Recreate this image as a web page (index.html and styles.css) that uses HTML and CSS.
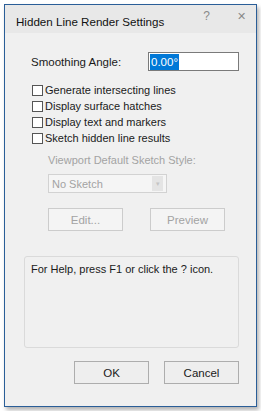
FILE: index.html
```html
<!DOCTYPE html>
<html lang="en">
<head>
  <meta charset="UTF-8">
  <title>Hidden Line Render Settings</title>
  <link rel="stylesheet" href="styles.css">
</head>
<body>
  <div class="window">
    <div class="titlebar">
      <span class="title">Hidden Line Render Settings</span>
      <span class="title-btn help">?</span>
      <span class="title-btn close">&#x2715;</span>
    </div>

    <div class="content">
      <div class="angle-row">
        <label class="angle-label">Smoothing Angle:</label>
        <div class="textbox"><span class="selected">0.00°</span></div>
      </div>

      <div class="checks">
        <div class="check"><span class="box"></span>Generate intersecting lines</div>
        <div class="check"><span class="box"></span>Display surface hatches</div>
        <div class="check"><span class="box"></span>Display text and markers</div>
        <div class="check"><span class="box"></span>Sketch hidden line results</div>
      </div>

      <div class="sketch">
        <div class="sketch-label">Viewport Default Sketch Style:</div>
        <div class="combo">
          <span>No Sketch</span>
          <span class="combo-arrow">&#9662;</span>
        </div>
        <div class="sketch-buttons">
          <button class="btn disabled">Edit...</button>
          <button class="btn disabled">Preview</button>
        </div>
      </div>

      <div class="helpbox">For Help, press F1 or click the ? icon.</div>

      <div class="footer">
        <button class="btn">OK</button>
        <button class="btn">Cancel</button>
      </div>
    </div>
  </div>
</body>
</html>
```

FILE: styles.css
```css
body {
  margin: 0;
  padding: 4px;
  background-color: #ffffff;
  font-family: "Liberation Sans", Arial, sans-serif;
  font-size: 11px;
  color: #1a1a1a;
}
.window {
  width: 251px;
  height: 401px;
  border: 1px solid #2a5e98;
  background-color: #f0f0f0;
  box-shadow: 2px 3px 4px rgba(0, 0, 0, 0.3);
  display: flex;
  flex-direction: column;
}
.titlebar {
  height: 28px;
  background-color: #e8e8e8;
  display: flex;
  align-items: center;
  padding-left: 11px;
  padding-top: 5px;
  box-sizing: border-box;
}
.title {
  flex: 1;
  font-size: 11.6px;
  color: #111;
}
.title-btn {
  color: #8a8a8a;
  font-size: 12px;
  margin-top: -11px;
}
.help {
  margin-right: 27px;
}
.close {
  font-size: 11px;
  margin-right: 10px;
}
.content {
  padding: 0 17px 0 19px;
  display: flex;
  flex-direction: column;
}
.angle-row {
  display: flex;
  align-items: center;
  margin-top: 19px;
  padding-left: 7px;
}
.angle-label {
  width: 117px;
  font-size: 11.5px;
}
.textbox {
  flex: 1;
  height: 19px;
  box-sizing: border-box;
  border: 1px solid #7a7a7a;
  background-color: #ffffff;
  padding: 1px;
  display: flex;
  align-items: center;
}
.selected {
  background-color: #0078d7;
  color: #ffffff;
  padding: 1px 1px;
  line-height: 14px;
  font-size: 11.5px;
}
.checks {
  margin-top: 11px;
  padding-left: 8px;
}
.check {
  height: 16px;
  display: flex;
  align-items: center;
}
.box {
  width: 11px;
  height: 11px;
  box-sizing: border-box;
  border: 1px solid #555555;
  background-color: #ffffff;
  margin-right: 2px;
}
.sketch {
  padding-left: 24px;
}
.sketch-label {
  color: #a3a3a3;
  margin-top: 7px;
  height: 15px;
  line-height: 15px;
}
.combo {
  width: 119px;
  height: 19px;
  box-sizing: border-box;
  margin-top: 6px;
  border: 1px solid #d2d2d2;
  background-color: #f5f5f5;
  color: #a3a3a3;
  display: flex;
  align-items: center;
  justify-content: space-between;
  padding-left: 3px;
}
.combo-arrow {
  width: 11px;
  height: 15px;
  margin-right: 3px;
  background-color: #e4e4e4;
  color: #c4c4c4;
  font-size: 7px;
  display: flex;
  align-items: center;
  justify-content: center;
}
.sketch-buttons {
  display: flex;
  justify-content: space-between;
  width: 177px;
  margin-top: 15px;
}
.btn {
  width: 75px;
  height: 23px;
  border: 1px solid #adadad;
  background-color: #eeeeee;
  font-family: inherit;
  font-size: 11.5px;
  color: #1a1a1a;
  padding: 0;
}
.btn.disabled {
  border-color: #cccccc;
  background-color: #f4f4f4;
  color: #a3a3a3;
}
.helpbox {
  margin-top: 25px;
  height: 92px;
  box-sizing: border-box;
  border: 1px solid #dadada;
  border-radius: 3px;
  padding: 6px 6px;
}
.footer {
  display: flex;
  justify-content: flex-end;
  gap: 15px;
  margin-top: 13px;
}
```
